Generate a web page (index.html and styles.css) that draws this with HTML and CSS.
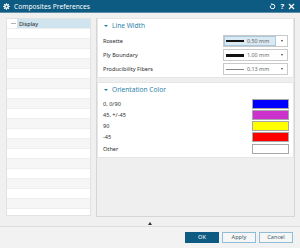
FILE: index.html
```html
<!DOCTYPE html>
<html>
<head>
<meta charset="utf-8">
<link rel="stylesheet" href="styles.css">
</head>
<body>
<div class="dialog">
  <div class="titlebar">
    <svg class="gear" width="7" height="7" viewBox="0 0 14 14">
      <g fill="#fff">
        <circle cx="7" cy="7" r="4.6"/>
        <rect x="5.8" y="0.3" width="2.4" height="13.4" rx="0.6"/>
        <rect x="0.3" y="5.8" width="13.4" height="2.4" rx="0.6"/>
        <rect x="5.8" y="0.3" width="2.4" height="13.4" rx="0.6" transform="rotate(45 7 7)"/>
        <rect x="5.8" y="0.3" width="2.4" height="13.4" rx="0.6" transform="rotate(-45 7 7)"/>
      </g>
      <circle cx="7" cy="7" r="2" fill="#0d5b82"/>
    </svg>
    <span class="title">Composites Preferences</span>
    <div class="tb-icons">
      <svg width="7" height="7" viewBox="0 0 14 14"><path d="M7 2.5 A4.5 4.5 0 1 1 2.8 5.6" fill="none" stroke="#fff" stroke-width="2"/><path d="M4.2 0.6 L8.2 2.6 L5 5.4 Z" fill="#fff"/></svg>
      <span class="q">?</span>
      <svg width="7" height="7" viewBox="0 0 14 14"><path d="M2 2 L12 12 M12 2 L2 12" stroke="#fff" stroke-width="2.4"/></svg>
    </div>
  </div>
  <div class="main">
    <div class="tree">
      <div class="trow sel"><span class="conn"></span><span class="tlabel">Display</span></div>
      <div class="trow"></div><div class="trow alt"></div><div class="trow"></div><div class="trow alt"></div>
      <div class="trow"></div><div class="trow alt"></div><div class="trow"></div><div class="trow alt"></div>
      <div class="trow"></div><div class="trow alt"></div><div class="trow"></div><div class="trow alt"></div>
      <div class="trow"></div><div class="trow alt"></div><div class="trow"></div><div class="trow alt"></div>
      <div class="trow"></div><div class="trow alt"></div><div class="trow"></div>
    </div>
    <div class="content">
      <div class="section s1">
        <div class="shead"><span class="tri"></span>Line Width</div>
        <div class="lrow">
          <span class="lbl">Rosette</span>
          <div class="dd">
            <div class="ddval hl"><span class="ln w2"></span><span class="ddtext">0.50 mm</span></div>
            <div class="ddarrow"><span class="dtri"></span></div>
          </div>
        </div>
        <div class="lrow">
          <span class="lbl">Ply Boundary</span>
          <div class="dd">
            <div class="ddval"><span class="ln w3"></span><span class="ddtext">1.00 mm</span></div>
            <div class="ddarrow"><span class="dtri"></span></div>
          </div>
        </div>
        <div class="lrow">
          <span class="lbl">Producibility Fibers</span>
          <div class="dd">
            <div class="ddval"><span class="ln w1"></span><span class="ddtext">0.13 mm</span></div>
            <div class="ddarrow"><span class="dtri"></span></div>
          </div>
        </div>
      </div>
      <div class="section s2">
        <div class="shead"><span class="tri"></span>Orientation Color</div>
        <div class="crow"><span class="lbl">0, 0/90</span><span class="sw blue"></span></div>
        <div class="crow"><span class="lbl">45, +/-45</span><span class="sw magenta"></span></div>
        <div class="crow"><span class="lbl">90</span><span class="sw yellow"></span></div>
        <div class="crow"><span class="lbl">-45</span><span class="sw red"></span></div>
        <div class="crow"><span class="lbl">Other</span><span class="sw white"></span></div>
      </div>
    </div>
  </div>
  <div class="splitter"><span class="up"></span></div>
  <div class="footer">
    <button class="btn ok">OK</button>
    <button class="btn">Apply</button>
    <button class="btn">Cancel</button>
  </div>
</div>
</body>
</html>
```
FILE: styles.css
```css
* { box-sizing: border-box; }
html, body { margin: 0; padding: 0; }
body {
  width: 300px;
  height: 248px;
  overflow: hidden;
  background: #f0f0f0;
  font-family: "Noto Sans", "Open Sans", sans-serif;
  color: #333;
}
.dialog { width: 300px; height: 248px; display: flex; flex-direction: column; }
.titlebar {
  height: 13px;
  background: #0d5b82;
  border-bottom: 1px solid #5f8fa8;
  display: flex;
  align-items: center;
  padding: 0 0 0 3px;
  color: #fff;
}
.gear { display: block; }
.title { font-size: 6.6px; margin-left: 4px; letter-spacing: 0.05px; }
.tb-icons { margin-left: auto; display: flex; align-items: center; gap: 4px; padding-right: 5px; }
.tb-icons svg { display: block; }
.q { font-size: 7.5px; font-weight: bold; line-height: 7px; }
.main {
  display: flex;
  gap: 5px;
  padding: 5px 5px 0 6px;
  height: 204px;
}
.tree {
  width: 85px;
  height: 198px;
  background: #fff;
  border: 1px solid #e2e2e2;
  overflow: hidden;
}
.trow { height: 10px; background: #fff; border-bottom: 1px solid #eeeeee; display: flex; align-items: center; }
.trow.alt { background: #f6f6f6; }
.trow.sel { background: #fff; }
.conn { width: 5px; height: 1px; background: #b5b5b5; margin-left: 4px; }
.tlabel {
  flex: 1;
  height: 100%;
  margin-left: 1px;
  background: #cfe4ef;
  font-size: 5.6px;
  line-height: 10px;
  padding-left: 2px;
  color: #222;
}
.content {
  flex: 1;
  height: 199px;
  background: #efefef;
  border: 1px solid #d6d6d6;
  border-top: none;
  display: flex;
  flex-direction: column;
  gap: 4px;
}
.section { background: #fff; border: 1px solid #e6e6e6; }
.s1 { height: 60px; padding: 0 5px 0 5px; }
.s2 { height: 76px; padding: 0 4px 0 5px; }
.shead {
  height: 13px;
  display: flex;
  align-items: center;
  font-size: 6.6px;
  color: #2b7fa8;
}
.tri {
  width: 0; height: 0;
  border-left: 2px solid transparent;
  border-right: 2px solid transparent;
  border-top: 2.5px solid #2b7fa8;
  margin: 0 4px 0 1px;
}
.s1 .shead { margin-bottom: 3px; }
.s2 .shead { margin-bottom: 2px; }
.lrow { height: 12px; margin-bottom: 2px; display: flex; align-items: center; justify-content: space-between; }
.lbl { font-size: 5.6px; color: #2e2e2e; }
.dd {
  width: 65px;
  height: 12px;
  border: 1px solid #c9c9c9;
  background: #fff;
  display: flex;
}
.ddval { flex: 1; display: flex; align-items: center; padding-left: 2px; gap: 3px; }
.ddval.hl { background: #dbe9f3; outline: 1px solid #a9c9df; outline-offset: -1px; }
.ln { width: 18px; background: #111; display: block; }
.ln.w2 { height: 2px; }
.ln.w3 { height: 3px; }
.ln.w1 { height: 1px; background: #888; }
.ddtext { font-size: 5.4px; color: #666; }
.ddarrow { width: 11px; display: flex; align-items: center; justify-content: center; }
.dtri {
  width: 0; height: 0;
  border-left: 1.5px solid transparent;
  border-right: 1.5px solid transparent;
  border-top: 2px solid #444;
}
.crow { height: 11.25px; display: flex; align-items: center; justify-content: space-between; }
.sw { width: 37px; height: 10px; border: 1px solid #a8a8a8; display: block; }
.blue { background: #0000ff; }
.magenta { background: #cc33cc; }
.yellow { background: #ffff00; }
.red { background: #ff0000; }
.white { background: #ffffff; }
.splitter {
  height: 10px;
  border-bottom: 1px solid #dcdcdc;
  display: flex;
  justify-content: center;
  align-items: flex-start;
  padding-top: 5px;
}
.up {
  width: 0; height: 0;
  border-left: 2px solid transparent;
  border-right: 2px solid transparent;
  border-bottom: 3px solid #333;
}
.footer {
  flex: 1;
  background: #f2f2f2;
  display: flex;
  justify-content: flex-end;
  align-items: flex-start;
  padding: 5px 7px 0 0;
  gap: 3px;
}
.btn {
  width: 34px;
  height: 11px;
  padding: 0;
  margin: 0;
  border: 1px solid #8fbcd6;
  background: #f6f6f6;
  color: #3c5a6c;
  font-family: "Noto Sans", "Open Sans", sans-serif;
  font-size: 5.6px;
  line-height: 9px;
}
.btn.ok { background: #0d5b82; border-color: #0d5b82; color: #fff; }
```
